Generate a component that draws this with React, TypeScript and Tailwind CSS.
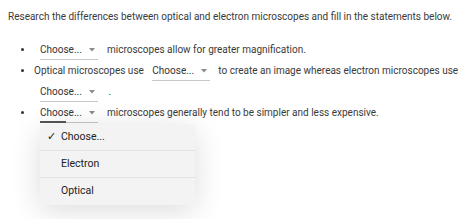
import { ReactNode } from 'react'

function Select({ focused, children }: { focused?: boolean; children?: ReactNode }) {
  return (
    <span className="relative inline-flex items-center mx-[6px] w-[58px] h-[19px] border-b border-[#c8c8c8] align-middle">
      <span className="text-[#333]">Choose...</span>
      <svg className="ml-[7px]" width="6" height="3.5" viewBox="0 0 6 3.5">
        <path d="M0 0 L6 0 L3 3.5 Z" fill="#8a8a8a" />
      </svg>
      {focused && <span className="absolute left-0 -bottom-px h-[1.5px] w-[26px] bg-[#555]" />}
      {children}
    </span>
  )
}

export default function App() {
  return (
    <div className="w-[474px] h-[219px] bg-white text-[10px] text-[#3a3a3a] overflow-hidden" style={{ fontFamily: 'Roboto, "Liberation Sans", sans-serif' }}>
      <p className="pl-[8px] pt-[10px] leading-[14px]">
        Research the differences between optical and electron microscopes and fill in the statements below.
      </p>
      <ul className="mt-[15px] pl-[34px] list-disc leading-[21px] marker:text-[#333]">
        <li>
          <Select />
          <span className="ml-[3px]">microscopes allow for greater magnification.</span>
        </li>
        <li>
          Optical microscopes use <Select />
          <span className="ml-[2px]">to create an image whereas electron microscopes use</span>
          <br />
          <Select /> <span className="ml-[2px]">.</span>
        </li>
        <li>
          <Select focused>
            <div className="absolute left-0 top-[20px] w-[155px] rounded-[6px] bg-[#f3f3f3] shadow-[0_6px_30px_rgba(0,0,0,0.14)] z-10 leading-none text-[10.5px]">
              <div className="h-[27px] flex items-center pl-[7px] border-b border-[#e2e2e2]">
                <span className="w-[14px] text-[#222] text-[11px]" style={{ fontFamily: '"DejaVu Sans", sans-serif' }}>✓</span>
                <span className="text-[#222]">Choose...</span>
              </div>
              <div className="h-[27px] flex items-center pl-[21px] border-b border-[#e2e2e2] text-[#222]">Electron</div>
              <div className="h-[27px] flex items-center pl-[21px] text-[#222]">Optical</div>
            </div>
          </Select>
          <span className="ml-[3px]">microscopes generally tend to be simpler and less expensive.</span>
        </li>
      </ul>
    </div>
  )
}
